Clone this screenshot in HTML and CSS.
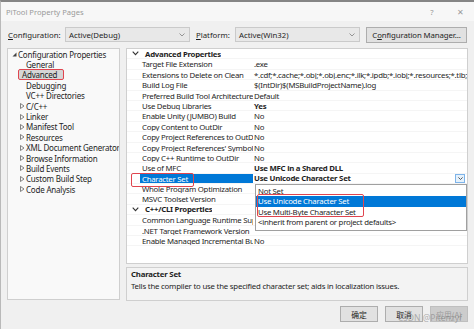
FILE: index.html
```html
<!DOCTYPE html>
<html lang="en">
<head>
  <meta charset="UTF-8">
  <meta name="viewport" content="width=device-width, initial-scale=1.0">
  <title>PiTool Property Pages</title>
  <link rel="stylesheet" href="styles.css">
</head>
<body>
  <div class="window">
    <div class="titlebar">
      <span class="title">PiTool Property Pages</span>
      <span class="tb-help">?</span>
      <span class="tb-close">✕</span>
    </div>

    <div class="config-row">
      <label class="lbl-config"><u>C</u>onfiguration:</label>
      <div class="combo combo-config">
        <span>Active(Debug)</span>
        <svg width="6" height="4" viewBox="0 0 6 4"><path d="M0.5 0.5 L3 3 L5.5 0.5" fill="none" stroke="#8a8a8a" stroke-width="0.9"/></svg>
      </div>
      <label class="lbl-platform"><u>P</u>latform:</label>
      <div class="combo combo-platform">
        <span>Active(Win32)</span>
        <svg width="6" height="4" viewBox="0 0 6 4"><path d="M0.5 0.5 L3 3 L5.5 0.5" fill="none" stroke="#8a8a8a" stroke-width="0.9"/></svg>
      </div>
      <button class="btn btn-manager">C<u>o</u>nfiguration Manager...</button>
    </div>

    <div class="main">
      <div class="tree">
        <div class="node lvl0">
          <svg class="tw" width="5" height="5" viewBox="0 0 5 5"><path d="M4.5 0.5 L4.5 4.5 L0.5 4.5 Z" fill="#444"/></svg>
          <span>Configuration Properties</span>
        </div>
        <div class="node lvl1"><span class="tw"></span><span>General</span></div>
        <div class="node lvl1"><span class="tw"></span><span class="picked">Advanced</span></div>
        <div class="node lvl1"><span class="tw"></span><span>Debugging</span></div>
        <div class="node lvl1"><span class="tw"></span><span>VC++ Directories</span></div>
        <div class="node lvl1"><svg class="tw" width="5" height="6" viewBox="0 0 5 6"><path d="M0.5 0.5 L4 3 L0.5 5.5 Z" fill="none" stroke="#666" stroke-width="0.8"/></svg><span>C/C++</span></div>
        <div class="node lvl1"><svg class="tw" width="5" height="6" viewBox="0 0 5 6"><path d="M0.5 0.5 L4 3 L0.5 5.5 Z" fill="none" stroke="#666" stroke-width="0.8"/></svg><span>Linker</span></div>
        <div class="node lvl1"><svg class="tw" width="5" height="6" viewBox="0 0 5 6"><path d="M0.5 0.5 L4 3 L0.5 5.5 Z" fill="none" stroke="#666" stroke-width="0.8"/></svg><span>Manifest Tool</span></div>
        <div class="node lvl1"><svg class="tw" width="5" height="6" viewBox="0 0 5 6"><path d="M0.5 0.5 L4 3 L0.5 5.5 Z" fill="none" stroke="#666" stroke-width="0.8"/></svg><span>Resources</span></div>
        <div class="node lvl1"><svg class="tw" width="5" height="6" viewBox="0 0 5 6"><path d="M0.5 0.5 L4 3 L0.5 5.5 Z" fill="none" stroke="#666" stroke-width="0.8"/></svg><span>XML Document Generator</span></div>
        <div class="node lvl1"><svg class="tw" width="5" height="6" viewBox="0 0 5 6"><path d="M0.5 0.5 L4 3 L0.5 5.5 Z" fill="none" stroke="#666" stroke-width="0.8"/></svg><span>Browse Information</span></div>
        <div class="node lvl1"><svg class="tw" width="5" height="6" viewBox="0 0 5 6"><path d="M0.5 0.5 L4 3 L0.5 5.5 Z" fill="none" stroke="#666" stroke-width="0.8"/></svg><span>Build Events</span></div>
        <div class="node lvl1"><svg class="tw" width="5" height="6" viewBox="0 0 5 6"><path d="M0.5 0.5 L4 3 L0.5 5.5 Z" fill="none" stroke="#666" stroke-width="0.8"/></svg><span>Custom Build Step</span></div>
        <div class="node lvl1"><svg class="tw" width="5" height="6" viewBox="0 0 5 6"><path d="M0.5 0.5 L4 3 L0.5 5.5 Z" fill="none" stroke="#666" stroke-width="0.8"/></svg><span>Code Analysis</span></div>
      </div>

      <div class="right">
        <div class="grid">
          <div class="row cat">
            <div class="name"><svg class="chev" width="7" height="5" viewBox="0 0 7 5"><path d="M0.7 0.7 L3.5 3.7 L6.3 0.7" fill="none" stroke="#333" stroke-width="1.1"/></svg><span>Advanced Properties</span></div>
          </div>
          <div class="row"><div class="name"><span>Target File Extension</span></div><div class="val">.exe</div></div>
          <div class="row"><div class="name"><span>Extensions to Delete on Clean</span></div><div class="val">*.cdf;*.cache;*.obj;*.obj.enc;*.ilk;*.ipdb;*.iobj;*.resources;*.tlb;*.tli;*.tlh</div></div>
          <div class="row"><div class="name"><span>Build Log File</span></div><div class="val">$(IntDir)$(MSBuildProjectName).log</div></div>
          <div class="row"><div class="name"><span>Preferred Build Tool Architecture</span></div><div class="val">Default</div></div>
          <div class="row"><div class="name"><span>Use Debug Libraries</span></div><div class="val bold">Yes</div></div>
          <div class="row"><div class="name"><span>Enable Unity (JUMBO) Build</span></div><div class="val">No</div></div>
          <div class="row"><div class="name"><span>Copy Content to OutDir</span></div><div class="val">No</div></div>
          <div class="row"><div class="name"><span>Copy Project References to OutDir</span></div><div class="val">No</div></div>
          <div class="row"><div class="name"><span>Copy Project References' Symbols</span></div><div class="val">No</div></div>
          <div class="row"><div class="name"><span>Copy C++ Runtime to OutDir</span></div><div class="val">No</div></div>
          <div class="row"><div class="name"><span>Use of MFC</span></div><div class="val bold">Use MFC in a Shared DLL</div></div>
          <div class="row selected">
            <div class="name"><span>Character Set</span></div>
            <div class="val bold editing">
              <span>Use Unicode Character Set</span>
              <span class="dd-btn"><svg width="5" height="3" viewBox="0 0 5 3"><path d="M0.4 0.4 L2.5 2.5 L4.6 0.4" fill="none" stroke="#333" stroke-width="0.8"/></svg></span>
            </div>
            <div class="redbox redbox-name"></div>
          </div>
          <div class="row"><div class="name"><span>Whole Program Optimization</span></div><div class="val"></div></div>
          <div class="row"><div class="name"><span>MSVC Toolset Version</span></div><div class="val"></div></div>
          <div class="row cat">
            <div class="name"><svg class="chev" width="7" height="5" viewBox="0 0 7 5"><path d="M0.7 0.7 L3.5 3.7 L6.3 0.7" fill="none" stroke="#333" stroke-width="1.1"/></svg><span>C++/CLI Properties</span></div>
          </div>
          <div class="row"><div class="name"><span>Common Language Runtime Support</span></div><div class="val"></div></div>
          <div class="row"><div class="name"><span>.NET Target Framework Version</span></div><div class="val"></div></div>
          <div class="row"><div class="name"><span>Enable Managed Incremental Build</span></div><div class="val">No</div></div>

          <div class="dropdown">
            <div class="opt">Not Set</div>
            <div class="opt active">Use Unicode Character Set</div>
            <div class="opt">Use Multi-Byte Character Set</div>
            <div class="opt">&lt;inherit from parent or project defaults&gt;</div>
            <div class="redbox redbox-opts"></div>
          </div>
        </div>

        <div class="desc">
          <div class="desc-title">Character Set</div>
          <div class="desc-text">Tells the compiler to use the specified character set; aids in localization issues.</div>
        </div>
      </div>
    </div>

    <div class="footer">
      <button class="btn btn-foot">确定</button>
      <button class="btn btn-foot">取消</button>
      <button class="btn btn-foot disabled">应用(A)</button>
      <span class="watermark">CSDN @Pitenzyf</span>
    </div>
  </div>
</body>
</html>
```

FILE: styles.css
```css
body {
  margin: 0;
  padding: 0;
  font-family: "Noto Sans", "Noto Sans CJK SC", sans-serif;
  font-size: 7.8px;
  color: #1e1e1e;
  background-color: #f0f0f0;
}
.window {
  position: relative;
  width: 474px;
  height: 329px;
  box-sizing: border-box;
  background: #f0f0f0;
  border-top: 2px solid #858585;
  border-left: 1px solid #b9b9b9;
  overflow: hidden;
}
.titlebar {
  display: flex;
  align-items: center;
  height: 19px;
  padding-left: 5px;
  background: #f7f7f7;
  color: #9a9a9a;
  font-size: 7.6px;
}
.title {
  flex: 1;
}
.tb-help {
  width: 28px;
  text-align: center;
}
.tb-close {
  width: 28px;
  text-align: center;
}
.config-row {
  display: flex;
  align-items: center;
  height: 27px;
}
.config-row label {
  font-size: 7.8px;
}
.lbl-config {
  width: 64px;
  padding-left: 7px;
  box-sizing: border-box;
}
.combo {
  display: flex;
  align-items: center;
  justify-content: space-between;
  width: 125px;
  height: 15px;
  box-sizing: border-box;
  padding: 0 4px 0 3px;
  background: #e8e8e8;
  border: 1px solid #cacaca;
  font-size: 7.8px;
}
.lbl-platform {
  width: 39px;
  margin-left: 6px;
}
.btn {
  font-family: "Noto Sans", "Noto Sans CJK SC", sans-serif;
  font-size: 7.8px;
  color: #1e1e1e;
  background: #e1e1e1;
  border: 1px solid #adadad;
  padding: 0;
  height: 15px;
}
.btn-manager {
  width: 101px;
  margin-left: 6px;
  height: 16px;
  letter-spacing: -0.1px;
}
.main {
  display: flex;
  height: 253px;
  padding-left: 6px;
}
.tree {
  width: 113px;
  height: 252px;
  box-sizing: border-box;
  background: #f9f9f9;
  border: 1px solid #cfcfcf;
  font-size: 8px;
  letter-spacing: -0.2px;
  overflow: hidden;
}
.node {
  display: flex;
  align-items: center;
  height: 10.4px;
  white-space: nowrap;
}
.lvl0 {
  padding-left: 4px;
}
.lvl1 {
  padding-left: 12px;
}
.tw {
  width: 5px;
  flex: none;
  margin-right: 1px;
}
.picked {
  margin-left: -8px;
  padding: 0 6px 0 3px;
  line-height: 9px;
  background: #d6d6d6;
  border: 1px solid #e0454f;
  border-radius: 2px;
}
.right {
  display: flex;
  flex-direction: column;
  gap: 3px;
  width: 342px;
  margin-left: 6px;
}
.grid {
  position: relative;
  height: 216px;
  box-sizing: border-box;
  background: #fff;
  border: 1px solid #cfcfcf;
  overflow: hidden;
  letter-spacing: -0.25px;
}
.row {
  position: relative;
  display: flex;
  height: 10.4px;
  line-height: 10.4px;
  box-sizing: border-box;
  border-bottom: 1px solid #f5f5f5;
  white-space: nowrap;
}
.name {
  width: 126px;
  flex: none;
  padding-left: 13px;
  box-sizing: border-box;
  overflow: hidden;
}
.name span {
  display: block;
  padding-left: 2px;
  overflow: hidden;
}
.val {
  flex: 1;
  padding-left: 1px;
  overflow: hidden;
}
.bold {
  font-weight: bold;
}
.cat .name {
  display: flex;
  align-items: center;
  width: 100%;
  padding-left: 5px;
  font-weight: bold;
}
.cat .name span {
  padding-left: 6px;
}
.chev {
  flex: none;
}
.selected .name span {
  background: #0078d7;
  color: #fff;
}
.editing {
  display: flex;
  align-items: center;
  justify-content: space-between;
  padding-right: 2px;
}
.dd-btn {
  display: flex;
  align-items: center;
  justify-content: center;
  width: 8px;
  height: 7px;
  border: 1px solid #7eb4ea;
  background: #e5f1fb;
}
.redbox {
  position: absolute;
  border: 1px solid #e0454f;
  border-radius: 2px;
}
.redbox-name {
  left: 4px;
  top: -1px;
  width: 61px;
  height: 12px;
}
.dropdown {
  position: absolute;
  left: 128px;
  top: 135px;
  width: 212px;
  height: 47px;
  box-sizing: border-box;
  padding-top: 1px;
  background: #fff;
  border: 1px solid #a0a0a0;
}
.opt {
  height: 10.4px;
  line-height: 10.4px;
  padding-left: 2px;
  white-space: nowrap;
}
.opt.active {
  background: #0078d7;
  color: #fff;
}
.redbox-opts {
  left: 1px;
  top: 9px;
  width: 105px;
  height: 21px;
}
.desc {
  height: 34px;
  box-sizing: border-box;
  padding: 1px 4px;
  background: #f3f3f3;
  border: 1px solid #cfcfcf;
  letter-spacing: -0.2px;
}
.desc-title {
  font-weight: bold;
  line-height: 11px;
}
.desc-text {
  line-height: 12px;
}
.footer {
  position: relative;
  display: flex;
  justify-content: flex-end;
  gap: 7px;
  padding: 5px 6px 0 0;
}
.btn-foot {
  width: 38px;
  height: 16px;
  font-family: "Noto Sans CJK SC", sans-serif;
}
.btn-foot.disabled {
  background: #cccccc;
  border-color: #bfbfbf;
  color: #9a9a9a;
}
.watermark {
  position: absolute;
  right: 12px;
  top: 11px;
  color: rgba(120, 120, 120, 0.55);
  font-size: 8.5px;
}
```
